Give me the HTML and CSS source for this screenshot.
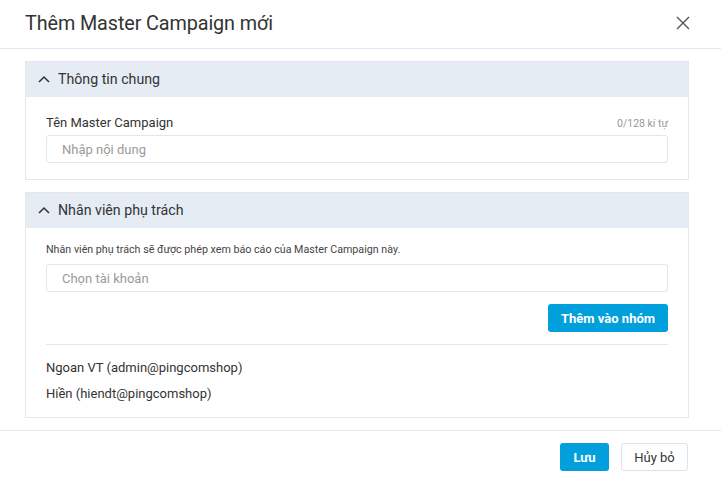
FILE: index.html
```html
<!DOCTYPE html>
<html lang="vi">
<head>
<meta charset="utf-8">
<link rel="stylesheet" href="styles.css">
</head>
<body>
<div class="modal">
  <div class="modal-header">
    <h1 class="modal-title">Thêm Master Campaign mới</h1>
    <button class="close-btn" aria-label="Đóng">
      <svg width="14" height="14" viewBox="0 0 14 14"><path d="M1 1L13 13M13 1L1 13" stroke="#555" stroke-width="1.4" fill="none"/></svg>
    </button>
  </div>
  <div class="modal-body">
    <section class="panel">
      <div class="panel-head">
        <svg class="chev" width="12" height="8" viewBox="0 0 12 8"><path d="M1 7L6 2L11 7" stroke="#333" stroke-width="1.5" fill="none"/></svg>
        <span>Thông tin chung</span>
      </div>
      <div class="panel-body p1">
        <div class="label-row">
          <span class="label">Tên Master Campaign</span>
          <span class="counter">0/128 kí tự</span>
        </div>
        <div class="input">Nhập nội dung</div>
      </div>
    </section>
    <section class="panel">
      <div class="panel-head">
        <svg class="chev" width="12" height="8" viewBox="0 0 12 8"><path d="M1 7L6 2L11 7" stroke="#333" stroke-width="1.5" fill="none"/></svg>
        <span>Nhân viên phụ trách</span>
      </div>
      <div class="panel-body p2">
        <div class="desc">Nhân viên phụ trách sẽ được phép xem báo cáo của Master Campaign này.</div>
        <div class="input">Chọn tài khoản</div>
        <div class="btn-row"><button class="btn primary wide">Thêm vào nhóm</button></div>
        <div class="divider"></div>
        <ul class="members">
          <li>Ngoan VT (admin@pingcomshop)</li>
          <li>Hiền (hiendt@pingcomshop)</li>
        </ul>
      </div>
    </section>
  </div>
  <div class="modal-footer">
    <button class="btn primary save">Lưu</button>
    <button class="btn ghost">Hủy bỏ</button>
  </div>
</div>
</body>
</html>
```
FILE: styles.css
```css
* { box-sizing: border-box; }
html, body { margin: 0; padding: 0; background: #fff; }
body { font-family: Roboto, "Noto Sans", sans-serif; color: #333; width: 721px; height: 480px; overflow: hidden; }

.modal { display: flex; flex-direction: column; height: 480px; }

.modal-header {
  height: 49px;
  border-bottom: 1px solid #e6e8ee;
  display: flex;
  align-items: center;
  justify-content: space-between;
  padding: 0 31px 2px 25px;
}
.modal-title { margin: 0; font-size: 19.8px; font-weight: 400; color: #333; letter-spacing: -0.1px; }
.close-btn { border: 0; background: none; padding: 0; width: 14px; height: 14px; display: flex; cursor: pointer; }

.modal-body {
  padding: 12px 32px 12px 25px;
  display: flex;
  flex-direction: column;
  gap: 12px;
}

.panel { border: 1px solid #e3e6eb; }
.panel-head {
  height: 35px;
  background: #e5ecf4;
  display: flex;
  align-items: center;
  padding: 0 0 1px 12px;
  font-size: 14.2px;
  color: #333;
  gap: 8px;
}
.chev { display: block; margin-top: -1px; }

.panel-body { padding: 0 20px; }
.p1 { padding-top: 18px; padding-bottom: 16px; }
.label-row { display: flex; justify-content: space-between; align-items: baseline; height: 16px; margin-bottom: 4px; }
.label { font-size: 13px; color: #333; }
.counter { font-size: 10.5px; color: #999; }

.input {
  height: 28px;
  border: 1px solid #e3e6eb;
  border-radius: 3px;
  padding: 0 15px;
  display: flex;
  align-items: center;
  font-size: 13px;
  color: #9a9a9a;
}

.p2 { padding-top: 15px; padding-bottom: 14px; }
.desc { font-size: 10.7px; color: #444; height: 14px; line-height: 14px; margin-bottom: 7px; }
.btn-row { display: flex; justify-content: flex-end; margin-top: 12px; }
.divider { height: 1px; background: #e3e6eb; margin-top: 12px; }

.members { list-style: none; margin: 14px 0 0; padding: 0; font-size: 13px; color: #333; }
.members li { height: 18px; line-height: 18px; }
.members li + li { margin-top: 8px; }

.btn {
  height: 28px;
  border-radius: 3px;
  font-family: inherit;
  font-size: 13px;
  padding: 0;
  cursor: pointer;
}
.primary { background: #019fdc; color: #fff; border: 0; font-weight: 700; }
.wide { width: 120px; }
.save { width: 49px; }
.ghost { width: 67px; background: #fff; border: 1px solid #dfe2e8; color: #333; }

.modal-footer {
  border-top: 1px solid #e6e8ee;
  margin-top: auto;
  height: 50px;
  display: flex;
  justify-content: flex-end;
  align-items: flex-start;
  padding: 12px 33px 0 0;
  gap: 12px;
}
```
